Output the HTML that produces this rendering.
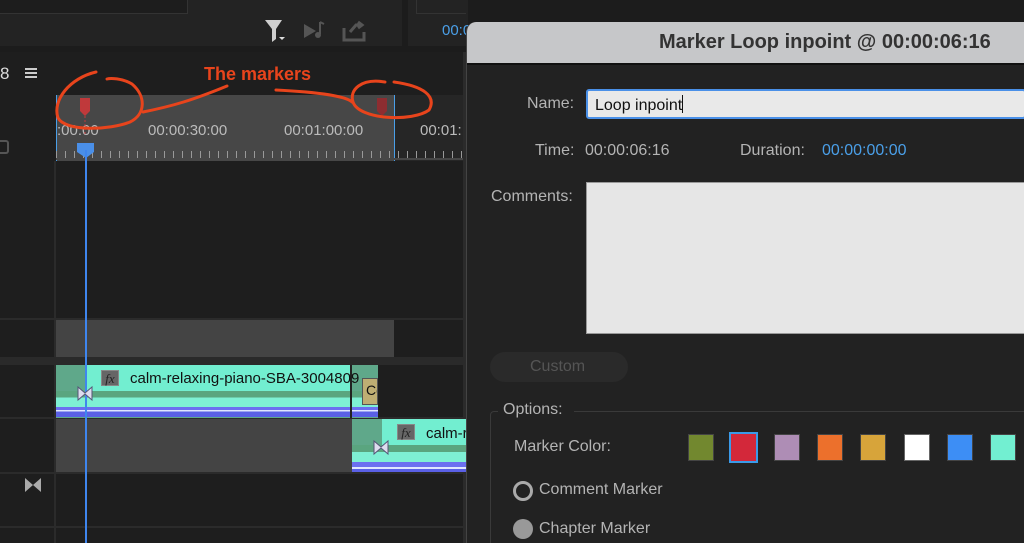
<!DOCTYPE html>
<html><head><style>
html,body{margin:0;width:1024px;height:543px;overflow:hidden}
body{background:#1c1c1c;position:relative;font-family:"Liberation Sans",sans-serif}
div{position:absolute;box-sizing:border-box}
.t{color:#b4b4b4;font-size:16px;white-space:nowrap}
</style></head><body>
<!-- top panels -->
<div style="left:0;top:0;width:402px;height:46px;background:#232323"></div>
<div style="left:0;top:0;width:188px;height:14px;background:#1d1d1d;border-bottom:1px solid #333;border-right:1px solid #333"></div>
<div style="left:408px;top:0;width:60px;height:46px;background:#232323"></div>
<div style="left:416px;top:0;width:50px;height:14px;border-left:1px solid #333;border-bottom:1px solid #333"></div>
<div class="t" style="left:442px;top:22px;color:#4a9fe8;font-size:15px">00:0</div>
<svg style="position:absolute;left:262px;top:18px" width="120" height="26">
<path d="M3 2h17l-6 9v10l-4 3V11z" fill="#cfcfcf"/><path d="M17 19h6l-3 3z" fill="#ddd"/>
<path d="M42 6v14l12-7z" fill="#555"/><path d="M58 4v12M58 4l4 2" stroke="#555" stroke-width="2" fill="none"/><circle cx="56" cy="17" r="3" fill="#555"/>
<path d="M82 10v12h20v-8" stroke="#555" stroke-width="3" fill="none"/><path d="M88 14l6-7h6M96 4l4 3-4 3" stroke="#555" stroke-width="3" fill="none"/>
</svg>
<!-- timeline -->
<div style="left:0;top:52px;width:466px;height:491px;background:#1e1e1e"></div>
<div class="t" style="left:0;top:64px;color:#ddd;font-size:17px">8</div>
<div style="left:25px;top:68px;width:12px;height:2px;background:#ccc;box-shadow:0 4px #ccc,0 8px #ccc"></div>
<div style="left:0;top:140px;width:9px;height:14px;border:2px solid #555;border-left:none;border-radius:0 3px 3px 0"></div>
<div style="left:56px;top:95px;width:339px;height:66px;background:#474747"></div>
<div style="left:395px;top:95px;width:69px;height:66px;background:#262626"></div>
<div style="left:56px;top:95px;width:1px;height:66px;background:#4a9fe8"></div>
<div style="left:394px;top:95px;width:1px;height:66px;background:#4a9fe8"></div>
<div style="left:56px;top:151px;width:408px;height:9px;background:repeating-linear-gradient(90deg,#999 0 1px,transparent 1px 9px)"></div>
<div style="left:56px;top:158px;width:408px;height:2px;background:#474747"></div>
<div class="t" style="left:57px;top:122px;color:#bbb;font-size:15px">:00:00</div>
<div class="t" style="left:148px;top:122px;color:#bbb;font-size:15px">00:00:30:00</div>
<div class="t" style="left:284px;top:122px;color:#bbb;font-size:15px">00:01:00:00</div>
<div class="t" style="left:420px;top:122px;color:#bbb;font-size:15px">00:01:</div>
<svg style="position:absolute;left:0;top:0" width="466" height="543">
<path d="M80 98h10v13l-5 5-5-5z" fill="#c0393b"/><path d="M377 98h10v13l-5 5-5-5z" fill="#8d2d31"/>
<path d="M85 116v20" stroke="#c0393b" stroke-dasharray="2 2"/>
<path d="M77 143h17v9l-8 6-9-6z" fill="#4a8fe8"/>
</svg>
<div style="left:85px;top:150px;width:1.5px;height:393px;background:#3f86ee;z-index:3"></div>
<!-- tracks -->
<div style="left:54px;top:161px;width:2px;height:382px;background:#2b2b2b"></div>
<div style="left:0;top:318px;width:466px;height:2px;background:#2b2b2b"></div>
<div style="left:56px;top:320px;width:338px;height:37px;background:#444"></div>
<div style="left:0;top:357px;width:466px;height:8px;background:#2a2a2a"></div>
<div style="left:0;top:417px;width:466px;height:2px;background:#2b2b2b"></div>
<div style="left:0;top:472px;width:466px;height:2px;background:#2b2b2b"></div>
<div style="left:0;top:526px;width:466px;height:2px;background:#2b2b2b"></div>
<div style="left:463px;top:52px;width:3px;height:491px;background:#2b2b2b"></div>
<!-- clip 1 -->
<div style="left:56px;top:365px;width:322px;height:53px;background:#5fa88a"></div>
<div style="left:86px;top:365px;width:264px;height:26px;background:#72eed0"></div>
<div style="left:56px;top:391px;width:322px;height:16px;background:linear-gradient(#5aa57f 0 40%,#7ef0d4 40%)"></div>
<div style="left:56px;top:407px;width:322px;height:10px;background:linear-gradient(#6b6ff0 0 30%,#dfe6ff 30% 45%,#5a60e6 45%)"></div>
<div style="left:350px;top:365px;width:2px;height:53px;background:#222"></div>
<div style="left:362px;top:378px;width:16px;height:27px;background:#bfae73;border:1px solid #555;font-size:14px;padding:3px 0 0 3px;overflow:hidden;color:#111">Co</div>
<div style="left:101px;top:370px;width:18px;height:16px;background:#666;border:1px solid #888;font:italic 13px 'Liberation Serif',serif;color:#222;text-align:center">fx</div>
<div class="t" style="left:130px;top:370px;color:#111;font-size:15px">calm-relaxing-piano-SBA-3004809</div>
<!-- A2 -->
<div style="left:56px;top:419px;width:296px;height:53px;background:#444"></div>
<div style="left:352px;top:419px;width:114px;height:53px;background:#5fa88a"></div>
<div style="left:382px;top:419px;width:84px;height:26px;background:#72eed0"></div>
<div style="left:352px;top:445px;width:114px;height:17px;background:linear-gradient(#5aa57f 0 40%,#7ef0d4 40%)"></div>
<div style="left:352px;top:462px;width:114px;height:10px;background:linear-gradient(#6b6ff0 0 50%,#dfe6ff 50% 70%,#5a60e6 70%)"></div>
<div style="left:397px;top:424px;width:18px;height:16px;background:#666;border:1px solid #888;font:italic 13px 'Liberation Serif',serif;color:#222;text-align:center">fx</div>
<div class="t" style="left:426px;top:425px;color:#111;font-size:15px">calm-r</div>
<svg style="position:absolute;left:0;top:0;z-index:4" width="466" height="543">
<path d="M78 387l7 6 7-6v13l-7-6-7 6z" fill="#dde" stroke="#557" />
<path d="M374 441l7 6 7-6v13l-7-6-7 6z" fill="#dde" stroke="#557"/>
<path d="M25 478l8 7 8-7v14l-8-7-8 7z" fill="#aaa"/>
</svg>
<!-- annotations -->
<svg style="position:absolute;left:0;top:0;z-index:5" width="466" height="200">
<g stroke="#e8441c" stroke-width="3" fill="none" stroke-linecap="round">
<path d="M96 72C70 78 52 100 58 118c8 14 52 12 72 4 16-8 16-26 2-38-10-6-22-6-25-5"/>
<path d="M143 112c30-6 50-12 84-26"/>
<path d="M276 90c40 2 70 6 76 12"/>
<path d="M385 82c-24-4-36 8-32 20 6 18 60 20 76 8 8-14-6-24-35-28"/>
</g>
<text x="204" y="80" fill="#e8441c" font-family="Liberation Sans" font-weight="bold" font-size="18">The markers</text>
</svg>
<!-- dialog -->
<div style="left:466px;top:22px;width:570px;height:521px;background:#222;border-radius:10px 0 0 0;overflow:hidden;border-left:1px solid #444;z-index:6">
<div style="left:0;top:0;width:570px;height:43px;background:#c6c7c9;border-bottom:2px solid #111"></div>
<div style="left:192px;top:9px;font-size:20px;font-weight:bold;color:#333;white-space:nowrap">Marker Loop inpoint @ 00:00:06:16</div>
</div>
<div style="z-index:7;left:0;top:0;width:1024px;height:543px;overflow:hidden">
<div class="t" style="left:527px;top:95px">Name:</div>
<div style="left:586px;top:89px;width:440px;height:30px;background:#e9e9e9;border:2px solid #4a90e8;border-radius:3px"></div>
<div class="t" style="left:595px;top:95px;color:#111">Loop inpoint<span style="display:inline-block;width:1px;height:18px;background:#111;vertical-align:-3px"></span></div>
<div class="t" style="left:535px;top:142px">Time:</div>
<div class="t" style="left:585px;top:142px">00:00:06:16</div>
<div class="t" style="left:740px;top:142px">Duration:</div>
<div class="t" style="left:822px;top:142px;color:#4a9fe8">00:00:00:00</div>
<div class="t" style="left:491px;top:188px">Comments:</div>
<div style="left:586px;top:182px;width:440px;height:152px;background:#e6e6e6;border:1px solid #999"></div>
<div style="left:490px;top:352px;width:138px;height:30px;background:#2a2a2a;border-radius:15px"></div>
<div class="t" style="left:530px;top:358px;color:#555">Custom</div>
<div style="left:490px;top:411px;width:540px;height:140px;border:1px solid #3a3a3a;border-radius:4px"></div>
<div style="left:498px;top:400px;width:76px;height:20px;background:#222"></div>
<div class="t" style="left:503px;top:401px">Options:</div>
<div class="t" style="left:514px;top:438px">Marker Color:</div>
<div style="left:688px;top:434px;width:26px;height:27px;background:#72882f;border:1px solid #444"></div>
<div style="left:729px;top:432px;width:29px;height:31px;background:#d3283a;border:2px solid #3a9ae8"></div>
<div style="left:774px;top:434px;width:26px;height:27px;background:#ae8db5;border:1px solid #444"></div>
<div style="left:817px;top:434px;width:26px;height:27px;background:#ec702c;border:1px solid #444"></div>
<div style="left:860px;top:434px;width:26px;height:27px;background:#d7a43a;border:1px solid #444"></div>
<div style="left:904px;top:434px;width:26px;height:27px;background:#fff;border:1px solid #666"></div>
<div style="left:947px;top:434px;width:26px;height:27px;background:#3d8ef5;border:1px solid #444"></div>
<div style="left:990px;top:434px;width:26px;height:27px;background:#72efd1;border:1px solid #444"></div>
<div style="left:513px;top:481px;width:20px;height:20px;border:3px solid #aaa;border-radius:50%"></div>
<div class="t" style="left:539px;top:481px">Comment Marker</div>
<div style="left:513px;top:519px;width:20px;height:20px;background:#999;border-radius:50%"></div>
<div class="t" style="left:539px;top:520px">Chapter Marker</div>
</div>
</body></html>
